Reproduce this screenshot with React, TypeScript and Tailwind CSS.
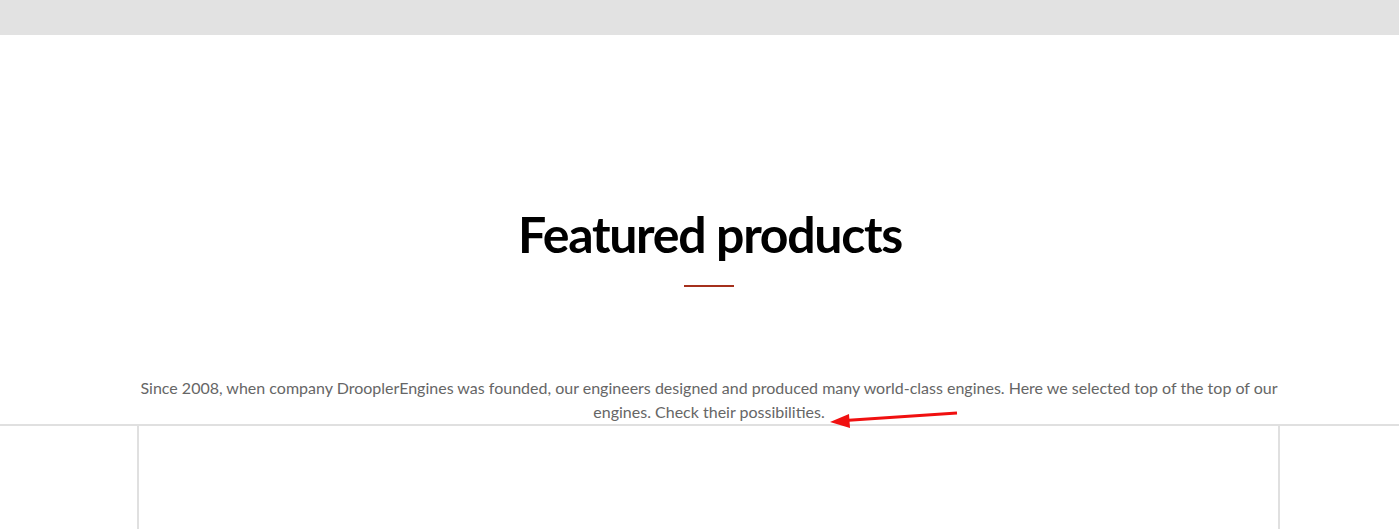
import React from "react";

const font = { fontFamily: "Lato, 'Noto Sans', sans-serif" };

export default function App() {
  return (
    <div className="relative w-[1399px] h-[529px] overflow-hidden bg-white" style={font}>
      {/* top bar */}
      <div className="h-[35px] bg-[#e2e2e2]" />

      {/* heading block */}
      <div className="ml-[137px] w-[1144px] flex flex-col items-center">
        <h2 className="mt-[167px] text-[50px] leading-[64px] font-bold text-black tracking-[-1.3px] pl-[2px]">
          Featured products
        </h2>
        <div className="mt-[19px] w-[50px] h-[2px] bg-[#a5301c]" />
        <p className="mt-[89px] text-[16px] leading-[24px] text-[#666666] text-center">
          Since 2008, when company DrooplerEngines was founded, our engineers designed and produced many world-class engines. Here we selected top of the top of our engines. Check their possibilities.
        </p>
      </div>

      {/* products area */}
      <div className="border-t-2 border-[#e0e0e0]">
        <div className="ml-[137px] w-[1143px] h-[120px] border-x-2 border-[#e0e0e0]" />
      </div>

      {/* annotation arrow */}
      <svg className="absolute left-[825px] top-[405px]" width="140" height="25" viewBox="0 0 140 25">
        <line x1="132" y1="8" x2="20" y2="15.5" stroke="#f01010" strokeWidth="3" />
        <polygon points="5,17 24,9 25,23" fill="#f01010" />
      </svg>
    </div>
  );
}
